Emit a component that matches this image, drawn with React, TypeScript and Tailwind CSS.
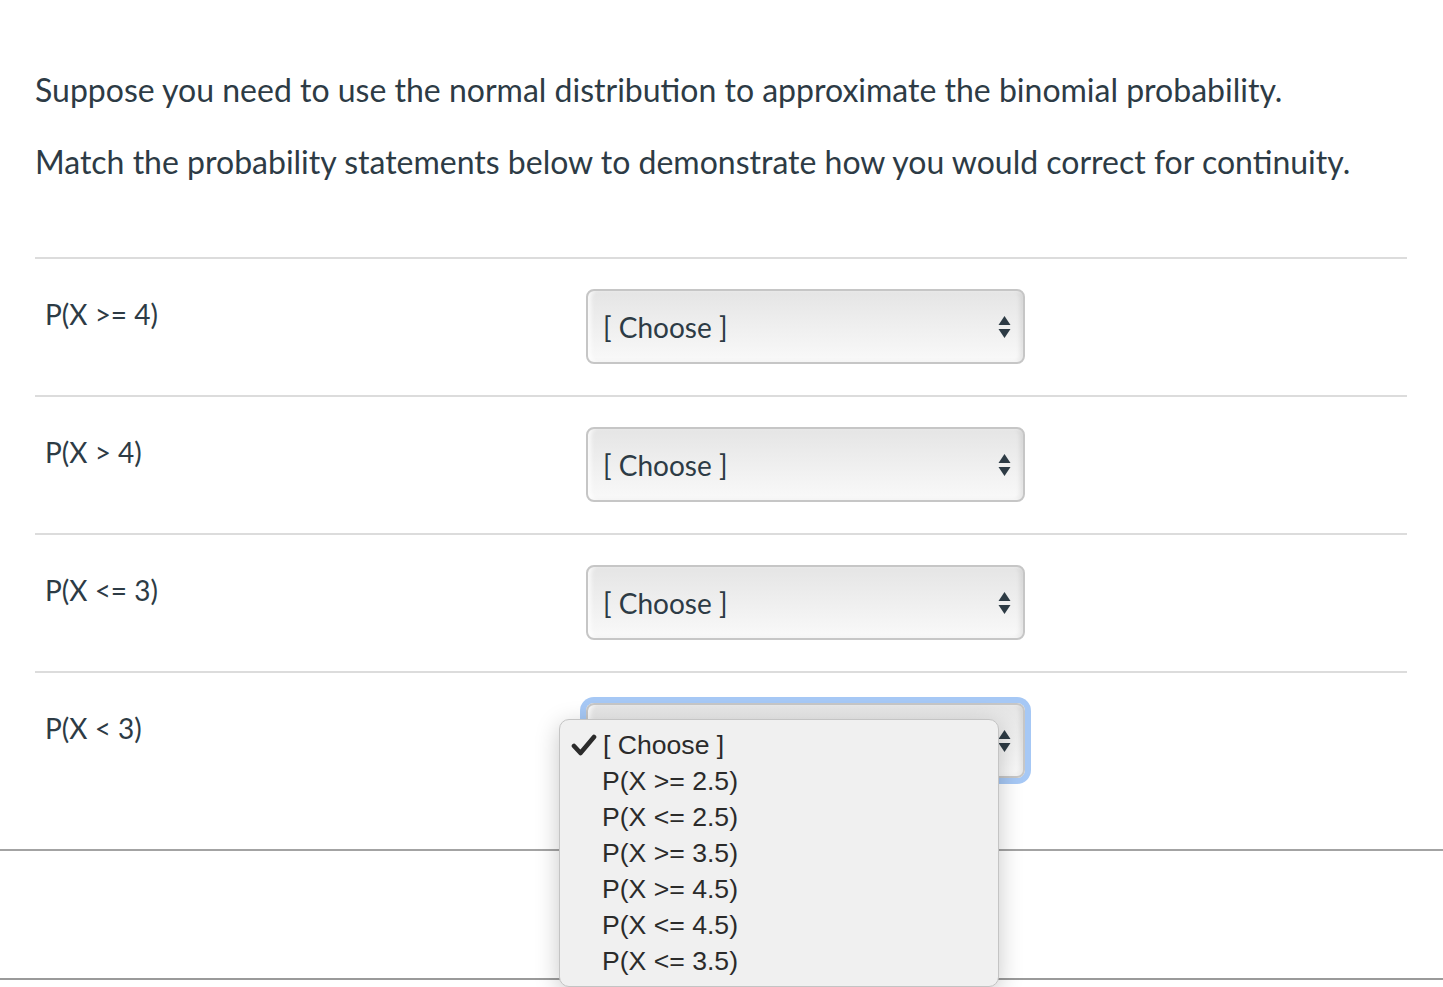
import React from 'react';

const rows = ['P(X >= 4)', 'P(X > 4)', 'P(X <= 3)'];

const options = [
  'P(X >= 2.5)',
  'P(X <= 2.5)',
  'P(X >= 3.5)',
  'P(X >= 4.5)',
  'P(X <= 4.5)',
  'P(X <= 3.5)',
];

function Arrows() {
  return (
    <svg width="13" height="24" viewBox="0 0 13 24" className="shrink-0">
      <path d="M6.5 1 L12.5 10 L0.5 10 Z" fill="#2d3b45" />
      <path d="M6.5 23 L12.5 14 L0.5 14 Z" fill="#2d3b45" />
    </svg>
  );
}

function Select({ focused, empty }: { focused?: boolean; empty?: boolean }) {
  return (
    <div
      className={`w-[439px] h-[75px] rounded-[8px] border-2 border-[#c6c6c6] bg-gradient-to-b from-[#e5e5e5] to-[#f9f9f9] shadow-[inset_3px_0_4px_rgba(255,255,255,0.8),inset_-3px_0_4px_rgba(0,0,0,0.08)] flex items-center justify-between pl-[15px] pr-[12px] ${
        focused ? 'ring-[6px] ring-[#a6c8f5]' : ''
      }`}
    >
      <span className="text-[28px] text-[#2d3b45] leading-none">{empty ? '' : '[ Choose ]'}</span>
      <Arrows />
    </div>
  );
}

function Row({ label, children }: { label: string; children: React.ReactNode }) {
  return (
    <div className="border-t-2 border-[#dcdcdc] h-[138px] flex items-start">
      <div className="w-[551px] pl-[10px] pt-[36px] text-[28px] leading-[38px] text-[#2d3b45]">{label}</div>
      <div className="pt-[30px]">{children}</div>
    </div>
  );
}

export default function App() {
  return (
    <div
      className="relative w-[1443px] h-[987px] overflow-hidden bg-white"
      style={{ fontFamily: 'Lato, "Open Sans", sans-serif' }}
    >
      <div className="pl-[35px] w-[1407px]">
        <div className="pt-[66px] text-[32px] leading-[48px] text-[#2d3b45]">
          <p>Suppose you need to use the normal distribution to approximate the binomial probability.</p>
          <p className="mt-[24px]">
            Match the probability statements below to demonstrate how you would correct for continuity.
          </p>
        </div>

        <div className="mt-[71px]">
          {rows.map((r) => (
            <Row key={r} label={r}>
              <Select />
            </Row>
          ))}
          <Row label="P(X < 3)">
            <Select focused empty />
          </Row>
        </div>
      </div>

      {/* footer rules */}
      <div className="absolute left-0 right-0 top-[849px] h-[2px] bg-[#a3a3a3]" />
      <div className="absolute left-0 right-0 top-[978px] h-[2px] bg-[#9a9a9a]" />

      {/* open dropdown menu */}
      <div
        className="absolute left-[559px] top-[719px] w-[440px] h-[268px] rounded-[10px] border border-[#c4c4c4] bg-[#f0f0f0] shadow-[0_6px_24px_rgba(0,0,0,0.22)] pt-[7px] text-[26.6px] leading-[36px] text-[#2b2b2b]"
        style={{ fontFamily: '"Liberation Sans", Arial, sans-serif' }}
      >
        <div className="flex items-center">
          <svg width="26" height="24" viewBox="0 0 26 24" className="ml-[11px] mr-[6px]">
            <path
              d="M3 13 L9.5 20 L23 4"
              fill="none"
              stroke="#2b2b2b"
              strokeWidth="4.6"
              strokeLinecap="round"
              strokeLinejoin="round"
            />
          </svg>
          <span>[ Choose ]</span>
        </div>
        {options.map((o) => (
          <div key={o} className="pl-[42px]">
            {o}
          </div>
        ))}
      </div>
    </div>
  );
}
